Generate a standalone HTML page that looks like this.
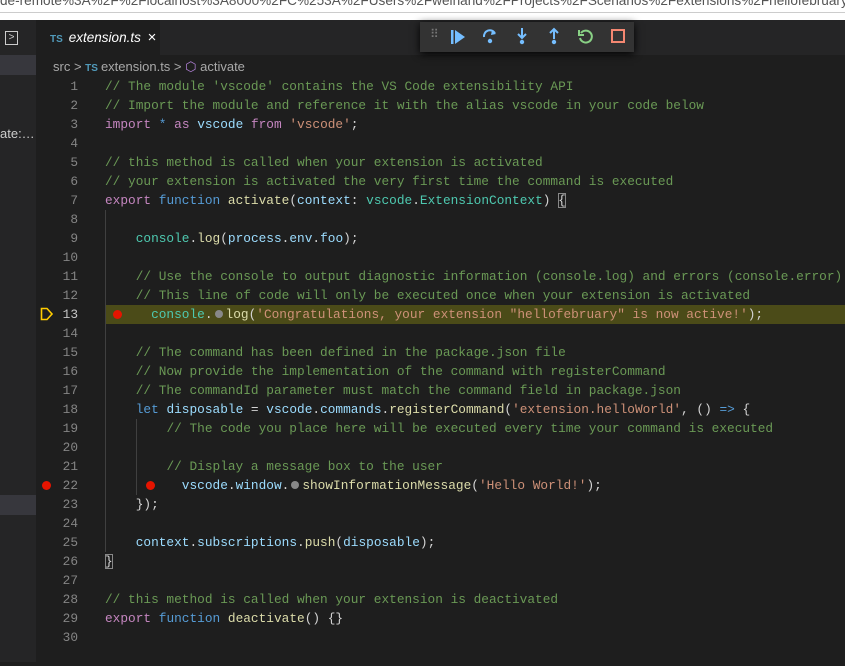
<!DOCTYPE html>
<html><head><meta charset="utf-8"><style>
*{margin:0;padding:0;box-sizing:border-box}
body{width:845px;height:662px;overflow:hidden;background:#1e1e1e;position:relative;font-family:"Liberation Sans",sans-serif}
.url{position:absolute;left:0;top:-9px;height:22px;width:845px;background:#fff;color:#555;font-size:13.6px;white-space:nowrap;overflow:hidden;line-height:20px}
.urlb{position:absolute;left:0;top:12px;width:845px;height:8px;background:#fff;border-top:1px solid #ccc}
.side{position:absolute;left:0;top:20px;width:36px;height:642px;background:#252526}
.tabs{position:absolute;left:36px;top:20px;width:809px;height:35px;background:#252526}
.tab{position:absolute;left:36px;top:20px;width:124px;height:35px;background:#1e1e1e;color:#fff;font-size:13.5px;line-height:35px;padding-left:14px}
.ts{color:#519aba;font-size:10px;font-weight:bold;font-style:normal;margin-right:6px}
.code{position:absolute;left:0;top:77px;font-family:"Liberation Mono",monospace;font-size:12.8px;line-height:19px;white-space:pre;color:#d4d4d4}
.ln{position:absolute;left:40px;width:38px;text-align:right;color:#858585}
.tx{position:absolute;left:105px}
.c{color:#6a9955}.k{color:#569cd6}.p{color:#c586c0}.f{color:#dcdcaa}.v{color:#9cdcfe}.s{color:#ce9178}.t{color:#4ec9b0}
.dot{display:inline-block;width:9px;height:9px;border-radius:50%;background:#e51400}
.gd{display:inline-block;width:8px;height:8px;border-radius:50%;background:#888;margin:0 3px 0 2px}
.bm{outline:1px solid #888;outline-offset:-1px}
</style></head><body>
<div class="url">de-remote%3A%2F%2Flocalhost%3A8000%2FC%253A%2FUsers%2Fweinand%2FProjects%2FScenarios%2Fextensions%2Fhellofebruary</div>
<div class="urlb"></div>
<div class="side"></div>
<div style="position:absolute;left:0;top:55px;width:36px;height:20px;background:#37373d"></div>
<div style="position:absolute;left:0;top:495px;width:36px;height:20px;background:#37373d"></div>
<div style="position:absolute;left:5px;top:31px;width:13px;height:14px;border:1px solid #ccc;color:#ccc;font-size:10px;line-height:11px;text-align:center">&gt;</div>
<div style="position:absolute;left:0;top:126px;color:#ccc;font-size:13px">ate:…</div>
<div class="tabs"></div>
<div class="tab"><i><span class="ts">TS</span>extension.ts</i> <span style="font-size:15px;margin-left:3px">×</span></div>
<div style="position:absolute;left:53px;top:59px;color:#a9a9a9;font-size:13px">src &gt; <span class="ts" style="margin-right:3px">TS</span>extension.ts &gt; <span style="color:#b180d7">⬡</span> activate</div>
<div style="position:absolute;left:420px;top:22px;width:214px;height:30px;background:#333;box-shadow:0 2px 8px #000;color:#75beff;font-size:16px">
<span style="position:absolute;left:10px;top:5px;color:#777;font-size:12px">⠿</span>
<svg style="position:absolute;left:30px;top:7px" width="16" height="16"><rect x="1" y="1" width="2.5" height="14" fill="#75beff"/><path d="M5 1 L15 8 L5 15Z" fill="#75beff"/></svg>
<svg style="position:absolute;left:62px;top:6px" width="16" height="18"><path d="M2 9 A6 6 0 0 1 13 5" stroke="#75beff" stroke-width="2" fill="none"/><path d="M10 2 L14 6 L9 7Z" fill="#75beff"/><circle cx="8" cy="13" r="2.2" fill="#75beff"/></svg>
<svg style="position:absolute;left:94px;top:5px" width="16" height="20"><path d="M8 1 V10 M4 7 L8 11 L12 7" stroke="#75beff" stroke-width="2" fill="none"/><circle cx="8" cy="15" r="2.2" fill="#75beff"/></svg>
<svg style="position:absolute;left:126px;top:5px" width="16" height="20"><path d="M8 12 V3 M4 6 L8 2 L12 6" stroke="#75beff" stroke-width="2" fill="none"/><circle cx="8" cy="15" r="2.2" fill="#75beff"/></svg>
<svg style="position:absolute;left:157px;top:6px" width="18" height="18"><path d="M4 5 A6 6 0 1 1 3 10" stroke="#89d185" stroke-width="2" fill="none"/><path d="M2 2 V7 H7" stroke="#89d185" stroke-width="2" fill="none"/></svg>
<svg style="position:absolute;left:191px;top:7px" width="16" height="16"><rect x="1" y="1" width="12" height="12" stroke="#f48771" stroke-width="2" fill="none"/></svg>
</div>
<div style="position:absolute;left:105px;top:305px;width:740px;height:19px;background:#4b4b18"></div>
<div style="position:absolute;left:105px;top:210px;width:1px;height:342px;background:#404040"></div>
<div style="position:absolute;left:136px;top:419px;width:1px;height:76px;background:#404040"></div>
<svg style="position:absolute;left:40px;top:307px" width="14" height="14"><path d="M1.5 1.5 H7 L12 7 L7 12.5 H1.5Z" stroke="#ffcc00" stroke-width="1.6" fill="none"/></svg>
<div style="position:absolute;left:42px;top:481px" class="dot"></div>
<div class="code">
<div class="ln" style="top:0">1</div><div class="tx" style="top:0"><span class="c">// The module 'vscode' contains the VS Code extensibility API</span></div>
<div class="ln" style="top:19px">2</div><div class="tx" style="top:19px"><span class="c">// Import the module and reference it with the alias vscode in your code below</span></div>
<div class="ln" style="top:38px">3</div><div class="tx" style="top:38px"><span class="p">import</span> <span class="k">*</span> <span class="p">as</span> <span class="v">vscode</span> <span class="p">from</span> <span class="s">'vscode'</span>;</div>
<div class="ln" style="top:57px">4</div>
<div class="ln" style="top:76px">5</div><div class="tx" style="top:76px"><span class="c">// this method is called when your extension is activated</span></div>
<div class="ln" style="top:95px">6</div><div class="tx" style="top:95px"><span class="c">// your extension is activated the very first time the command is executed</span></div>
<div class="ln" style="top:114px">7</div><div class="tx" style="top:114px"><span class="p">export</span> <span class="k">function</span> <span class="f">activate</span>(<span class="v">context</span>: <span class="t">vscode</span>.<span class="t">ExtensionContext</span>) <span class="bm">{</span></div>
<div class="ln" style="top:133px">8</div>
<div class="ln" style="top:152px">9</div><div class="tx" style="top:152px">    <span class="t">console</span>.<span class="f">log</span>(<span class="v">process</span>.<span class="v">env</span>.<span class="v">foo</span>);</div>
<div class="ln" style="top:171px">10</div>
<div class="ln" style="top:190px">11</div><div class="tx" style="top:190px">    <span class="c">// Use the console to output diagnostic information (console.log) and errors (console.error)</span></div>
<div class="ln" style="top:209px">12</div><div class="tx" style="top:209px">    <span class="c">// This line of code will only be executed once when your extension is activated</span></div>
<div class="ln" style="top:228px;color:#c6c6c6">13</div><div class="tx" style="top:228px">  <span class="dot" style="position:absolute;left:8px;top:5px"></span>    <span class="t">console</span>.<span class="gd"></span><span class="f">log</span>(<span class="s">'Congratulations, your extension "hellofebruary" is now active!'</span>);</div>
<div class="ln" style="top:247px">14</div>
<div class="ln" style="top:266px">15</div><div class="tx" style="top:266px">    <span class="c">// The command has been defined in the package.json file</span></div>
<div class="ln" style="top:285px">16</div><div class="tx" style="top:285px">    <span class="c">// Now provide the implementation of the command with registerCommand</span></div>
<div class="ln" style="top:304px">17</div><div class="tx" style="top:304px">    <span class="c">// The commandId parameter must match the command field in package.json</span></div>
<div class="ln" style="top:323px">18</div><div class="tx" style="top:323px">    <span class="k">let</span> <span class="v">disposable</span> = <span class="v">vscode</span>.<span class="v">commands</span>.<span class="f">registerCommand</span>(<span class="s">'extension.helloWorld'</span>, () <span class="k">=&gt;</span> {</div>
<div class="ln" style="top:342px">19</div><div class="tx" style="top:342px">        <span class="c">// The code you place here will be executed every time your command is executed</span></div>
<div class="ln" style="top:361px">20</div>
<div class="ln" style="top:380px">21</div><div class="tx" style="top:380px">        <span class="c">// Display a message box to the user</span></div>
<div class="ln" style="top:399px">22</div><div class="tx" style="top:399px"><span class="dot" style="position:absolute;left:41px;top:5px"></span>          <span class="v">vscode</span>.<span class="v">window</span>.<span class="gd"></span><span class="f">showInformationMessage</span>(<span class="s">'Hello World!'</span>);</div>
<div class="ln" style="top:418px">23</div><div class="tx" style="top:418px">    });</div>
<div class="ln" style="top:437px">24</div>
<div class="ln" style="top:456px">25</div><div class="tx" style="top:456px">    <span class="v">context</span>.<span class="v">subscriptions</span>.<span class="f">push</span>(<span class="v">disposable</span>);</div>
<div class="ln" style="top:475px">26</div><div class="tx" style="top:475px"><span class="bm">}</span></div>
<div class="ln" style="top:494px">27</div>
<div class="ln" style="top:513px">28</div><div class="tx" style="top:513px"><span class="c">// this method is called when your extension is deactivated</span></div>
<div class="ln" style="top:532px">29</div><div class="tx" style="top:532px"><span class="p">export</span> <span class="k">function</span> <span class="f">deactivate</span>() {}</div>
<div class="ln" style="top:551px">30</div>
</div>
</body></html>
